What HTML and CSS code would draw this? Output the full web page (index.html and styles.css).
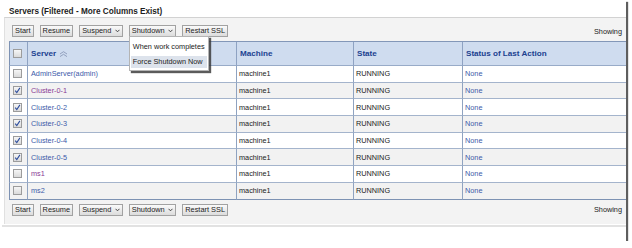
FILE: index.html
```html
<!DOCTYPE html>
<html>
<head>
<meta charset="utf-8">
<link rel="stylesheet" href="styles.css">
</head>
<body>
<div class="shot">
  <div class="title">Servers (Filtered - More Columns Exist)</div>
  <div class="panel">
    <div class="toolbar">
      <div class="btns">
        <span class="btn">Start</span>
        <span class="btn">Resume</span>
        <span class="btn">Suspend<svg class="dd" width="5" height="4" viewBox="0 0 5 4"><path d="M0.5 0.8 L2.5 2.8 L4.5 0.8" fill="none" stroke="#333" stroke-width="0.9"/></svg></span>
        <span class="menuwrap">
          <span class="btn">Shutdown<svg class="dd" width="5" height="4" viewBox="0 0 5 4"><path d="M0.5 0.8 L2.5 2.8 L4.5 0.8" fill="none" stroke="#333" stroke-width="0.9"/></svg></span>
          <div class="menu">
            <div class="mi">When work completes</div>
            <div class="mi hl">Force Shutdown Now</div>
          </div>
        </span>
        <span class="btn">Restart SSL</span>
      </div>
      <span class="showing">Showing</span>
    </div>
    <table class="grid">
      <colgroup>
        <col class="c0"><col class="c1"><col class="c2"><col class="c3"><col class="c4">
      </colgroup>
      <thead>
        <tr>
          <th class="cbc"><span class="cb"></span></th>
          <th>Server <svg class="sort" width="9" height="6" viewBox="0 0 9 6"><path d="M1 3 L4.5 0.7 L8 3 M1 5.6 L4.5 3.3 L8 5.6" fill="none" stroke="#8a99b8" stroke-width="0.9"/></svg></th>
          <th>Machine</th>
          <th>State</th>
          <th>Status of Last Action</th>
        </tr>
      </thead>
      <tbody>
        <tr><td class="cbc"><span class="cb"></span></td><td class="srv"><a class="lk">AdminServer(admin)</a></td><td>machine1</td><td>RUNNING</td><td><a class="lk">None</a></td></tr>
        <tr class="alt"><td class="cbc"><span class="cb on"><svg width="7" height="7" viewBox="0 0 7 7"><path d="M1.2 3.6 L2.8 5.6 L5.9 0.9" fill="none" stroke="#2f4f9e" stroke-width="1.1"/></svg></span></td><td class="srv"><a class="lk vis">Cluster-0-1</a></td><td>machine1</td><td>RUNNING</td><td><a class="lk">None</a></td></tr>
        <tr><td class="cbc"><span class="cb on"><svg width="7" height="7" viewBox="0 0 7 7"><path d="M1.2 3.6 L2.8 5.6 L5.9 0.9" fill="none" stroke="#2f4f9e" stroke-width="1.1"/></svg></span></td><td class="srv"><a class="lk">Cluster-0-2</a></td><td>machine1</td><td>RUNNING</td><td><a class="lk">None</a></td></tr>
        <tr class="alt"><td class="cbc"><span class="cb on"><svg width="7" height="7" viewBox="0 0 7 7"><path d="M1.2 3.6 L2.8 5.6 L5.9 0.9" fill="none" stroke="#2f4f9e" stroke-width="1.1"/></svg></span></td><td class="srv"><a class="lk">Cluster-0-3</a></td><td>machine1</td><td>RUNNING</td><td><a class="lk">None</a></td></tr>
        <tr><td class="cbc"><span class="cb on"><svg width="7" height="7" viewBox="0 0 7 7"><path d="M1.2 3.6 L2.8 5.6 L5.9 0.9" fill="none" stroke="#2f4f9e" stroke-width="1.1"/></svg></span></td><td class="srv"><a class="lk">Cluster-0-4</a></td><td>machine1</td><td>RUNNING</td><td><a class="lk">None</a></td></tr>
        <tr class="alt"><td class="cbc"><span class="cb on"><svg width="7" height="7" viewBox="0 0 7 7"><path d="M1.2 3.6 L2.8 5.6 L5.9 0.9" fill="none" stroke="#2f4f9e" stroke-width="1.1"/></svg></span></td><td class="srv"><a class="lk">Cluster-0-5</a></td><td>machine1</td><td>RUNNING</td><td><a class="lk">None</a></td></tr>
        <tr><td class="cbc"><span class="cb"></span></td><td class="srv"><a class="lk vis">ms1</a></td><td>machine1</td><td>RUNNING</td><td><a class="lk">None</a></td></tr>
        <tr class="alt"><td class="cbc"><span class="cb"></span></td><td class="srv"><a class="lk">ms2</a></td><td>machine1</td><td>RUNNING</td><td><a class="lk">None</a></td></tr>
      </tbody>
    </table>
    <div class="toolbar bottom">
      <div class="btns">
        <span class="btn">Start</span>
        <span class="btn">Resume</span>
        <span class="btn">Suspend<svg class="dd" width="5" height="4" viewBox="0 0 5 4"><path d="M0.5 0.8 L2.5 2.8 L4.5 0.8" fill="none" stroke="#333" stroke-width="0.9"/></svg></span>
        <span class="btn">Shutdown<svg class="dd" width="5" height="4" viewBox="0 0 5 4"><path d="M0.5 0.8 L2.5 2.8 L4.5 0.8" fill="none" stroke="#333" stroke-width="0.9"/></svg></span>
        <span class="btn">Restart SSL</span>
      </div>
      <span class="showing">Showing</span>
    </div>
  </div>
  <div class="rule"></div>
</div>
</body>
</html>
```
FILE: styles.css
```css
html, body {
  margin: 0;
  padding: 0;
  background: #fff;
}

.shot {
  width: 626px;
  height: 241px;
  overflow: hidden;
  position: relative;
  background: #fff;
  box-shadow: 2px 2px 1px rgba(40, 40, 40, 0.75);
  font-family: "Liberation Sans", Arial, sans-serif;
  font-size: 7.3px;
  color: #222;
}

.title {
  box-sizing: border-box;
  height: 17px;
  padding: 6px 0 0 9px;
  line-height: 11px;
  font-size: 8.2px;
  font-weight: bold;
  color: #1e1e1e;
}

.panel {
  margin-left: 4px;
  width: 622px;
  height: 207px;
  box-sizing: border-box;
  background: #f3f3f3;
  border-top: 1px solid #d2d2d2;
  border-left: 1px solid #e0e0e0;
}

.toolbar {
  display: flex;
  align-items: center;
  justify-content: space-between;
  box-sizing: border-box;
  height: 23px;
  padding: 7px 4px 4px 7px;
}

.toolbar.bottom {
  height: 20px;
  padding: 4px 4px 4px 7px;
}

.btns {
  display: flex;
  align-items: center;
  gap: 6px;
}

.btn {
  display: inline-flex;
  align-items: center;
  box-sizing: border-box;
  height: 12px;
  padding: 0 2px;
  border: 1px solid #a2a2a2;
  background: linear-gradient(#fafafa, #dcdcdc);
  color: #222;
  line-height: 10px;
  font-size: 7.4px;
  white-space: nowrap;
}

.dd {
  margin-left: 3.5px;
  display: block;
}

.menuwrap {
  position: relative;
  display: inline-flex;
}

.menu {
  position: absolute;
  left: 0;
  top: 11px;
  width: 80px;
  box-sizing: border-box;
  padding: 3px 1px 2px 1px;
  background: #fff;
  border: 1px solid #b4b4b4;
  box-shadow: 2px 2px 1px rgba(50, 50, 50, 0.8);
  z-index: 5;
}

.mi {
  height: 13px;
  line-height: 13px;
  padding-left: 2px;
  color: #222;
  white-space: nowrap;
}

.mi.hl {
  margin-top: 3px;
  height: 12px;
  line-height: 12px;
  background: #dde3ec;
}

.showing {
  color: #222;
}

.grid {
  margin-left: 4px;
  width: 617px;
  table-layout: fixed;
  border-collapse: separate;
  border-spacing: 0;
  border-top: 1px solid #8397b8;
}

.c0 { width: 18px; }
.c1 { width: 209px; }
.c2 { width: 117px; }
.c3 { width: 109px; }
.c4 { width: 164px; }

.grid th {
  height: 23px;
  padding: 0 0 0 3px;
  text-align: left;
  vertical-align: middle;
  font-size: 8.1px;
  font-weight: bold;
  color: #203f8f;
  background: #cfdcef;
  border-left: 1px solid #8ea2c2;
  border-bottom: 1px solid #98abc8;
  white-space: nowrap;
}

.grid td {
  height: 16.7px;
  box-sizing: border-box;
  padding: 0 0 0 2px;
  vertical-align: middle;
  background: #fff;
  border-left: 1px solid #8fa3c1;
  border-bottom: 1px solid #a4b4cc;
  white-space: nowrap;
  overflow: hidden;
}

.grid tr.alt td {
  background: #f2f2f2;
}

.grid td.srv {
  padding-left: 3px;
}

.grid .cbc {
  padding: 0 0 0 3px;
  border-left: 1px solid #7d92b3;
}

.grid tbody tr:last-child td {
  border-bottom: 1px solid #7d92b3;
}

.cb {
  display: block;
  width: 9px;
  height: 9px;
  box-sizing: border-box;
  border: 1px solid #9c9c9c;
  background: linear-gradient(#f6f6f6, #dadada);
  position: relative;
}

.cb svg {
  position: absolute;
  left: 0;
  top: 0;
}

.sort {
  vertical-align: middle;
  margin-left: 1px;
}

.lk {
  color: #3d5aa9;
  text-decoration: none;
}

.lk.vis {
  color: #8a3a95;
}

.rule {
  margin-top: 1px;
  margin-left: 2px;
  height: 2px;
  background: #e2e2e2;
}
```
